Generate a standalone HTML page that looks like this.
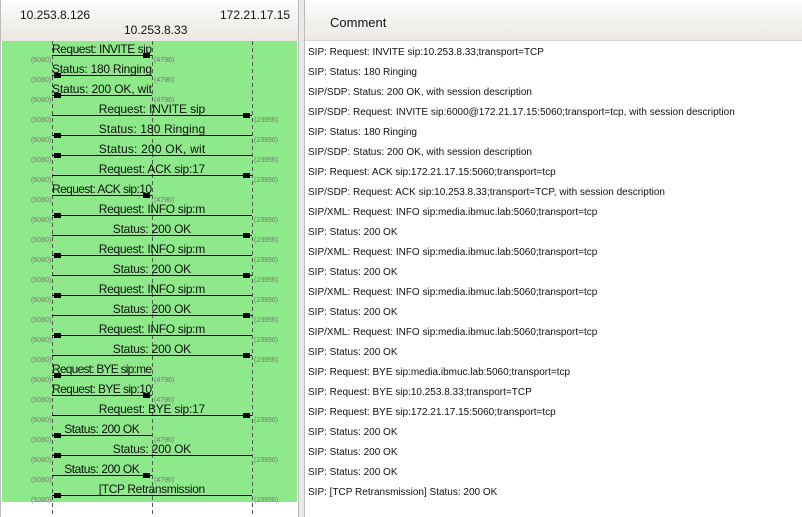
<!DOCTYPE html>
<html><head><meta charset="utf-8"><style>
body{margin:0;width:802px;height:517px;overflow:hidden;background:#fff;font-family:"Liberation Sans",sans-serif;position:relative}
.sep{position:absolute;left:298px;top:0;width:7px;height:517px;background:#e9e9e9;border-left:1px solid #bbb;border-right:1px solid #bbb;box-sizing:border-box}
.rh{position:absolute;left:305px;top:0;width:497px;height:41px;background:linear-gradient(#fdfdfd,#ece9e5);border-bottom:1px solid #d8d4ce;box-sizing:border-box}
.rh span{position:absolute;left:25px;top:15px;font-size:13px;color:#111}
.c{position:absolute;left:308px;font-size:10px;color:#111;white-space:nowrap}
</style></head><body>
<svg width="298" height="517" style="position:absolute;left:0;top:0" font-family="Liberation Sans, sans-serif">
<defs><linearGradient id="g" x1="0" y1="0" x2="0" y2="1"><stop offset="0" stop-color="#fdfdfd"/><stop offset="1" stop-color="#ebe7e2"/></linearGradient></defs>
<rect x="0" y="0" width="298" height="517" fill="#fff"/>
<rect x="0" y="0" width="298" height="41" fill="url(#g)"/>
<rect x="0" y="0" width="1" height="517" fill="#bbb"/>
<rect x="2" y="41" width="295" height="461" fill="#8ee98b"/>
<text x="20" y="19" font-size="12" fill="#111">10.253.8.126</text>
<text x="220" y="19" font-size="12" fill="#111">172.21.17.15</text>
<text x="124" y="34" font-size="12" fill="#111">10.253.8.33</text>
<g stroke="#555" stroke-dasharray="4,3" stroke-width="1"><line x1="52.5" y1="41" x2="52.5" y2="517"/><line x1="152.5" y1="41" x2="152.5" y2="517"/><line x1="252.5" y1="41" x2="252.5" y2="517"/></g>
<g id="rows" font-size="12" fill="#111"></g>
</svg>
<div class="sep"></div>
<div class="rh"><span>Comment</span></div>
<div id="cm"></div>
<script>
var R=[[52,152,"Request: INVITE sip","SIP: Request: INVITE sip:10.253.8.33;transport=TCP"],
[152,52,"Status: 180 Ringing","SIP: Status: 180 Ringing"],
[152,52,"Status: 200 OK, wit","SIP/SDP: Status: 200 OK, with session description"],
[52,252,"Request: INVITE sip","SIP/SDP: Request: INVITE sip:6000@172.21.17.15:5060;transport=tcp, with session description"],
[252,52,"Status: 180 Ringing","SIP: Status: 180 Ringing"],
[252,52,"Status: 200 OK, wit","SIP/SDP: Status: 200 OK, with session description"],
[52,252,"Request: ACK sip:17","SIP: Request: ACK sip:172.21.17.15:5060;transport=tcp"],
[52,152,"Request: ACK sip:10","SIP/SDP: Request: ACK sip:10.253.8.33;transport=TCP, with session description"],
[252,52,"Request: INFO sip:m","SIP/XML: Request: INFO sip:media.ibmuc.lab:5060;transport=tcp"],
[52,252,"Status: 200 OK","SIP: Status: 200 OK"],
[252,52,"Request: INFO sip:m","SIP/XML: Request: INFO sip:media.ibmuc.lab:5060;transport=tcp"],
[52,252,"Status: 200 OK","SIP: Status: 200 OK"],
[252,52,"Request: INFO sip:m","SIP/XML: Request: INFO sip:media.ibmuc.lab:5060;transport=tcp"],
[52,252,"Status: 200 OK","SIP: Status: 200 OK"],
[252,52,"Request: INFO sip:m","SIP/XML: Request: INFO sip:media.ibmuc.lab:5060;transport=tcp"],
[52,252,"Status: 200 OK","SIP: Status: 200 OK"],
[152,52,"Request: BYE sip:me","SIP: Request: BYE sip:media.ibmuc.lab:5060;transport=tcp"],
[52,152,"Request: BYE sip:10","SIP: Request: BYE sip:10.253.8.33;transport=TCP"],
[52,252,"Request: BYE sip:17","SIP: Request: BYE sip:172.21.17.15:5060;transport=tcp"],
[152,52,"Status: 200 OK","SIP: Status: 200 OK"],
[252,52,"Status: 200 OK","SIP: Status: 200 OK"],
[52,152,"Status: 200 OK","SIP: Status: 200 OK"],
[252,52,"[TCP Retransmission","SIP: [TCP Retransmission] Status: 200 OK"]];
var s="",c="";
R.forEach(function(r,i){var y=55+20*i,a=r[0],b=r[1],lo=Math.min(a,b),hi=Math.max(a,b),far=Math.max(a,b);
s+='<line x1="'+lo+'" y1="'+(y+.5)+'" x2="'+hi+'" y2="'+(y+.5)+'" stroke="#000"/>';
var hx=b>a?b-9:b+2;s+='<rect x="'+hx+'" y="'+(y-2)+'" width="7" height="5" fill="#000"/>';
s+='<text x="'+((lo+hi)/2)+'" y="'+(y-2)+'" text-anchor="middle" textLength="'+(hi-lo<110?Math.min(100,r[2].length*5.4):r[2].length*5.6)+'">'+r[2]+'</text>';
s+='<text x="31" y="'+(y+7)+'" font-size="7" fill="#777">(5080)</text>';
s+='<text x="'+(far+2)+'" y="'+(y+7)+'" font-size="7" fill="#777">('+(far==152?'4796':'23956')+')</text>';
c+='<div class="c" style="top:'+(47+20*i)+'px">'+r[3]+'</div>';});
document.getElementById('rows').innerHTML=s;document.getElementById('cm').innerHTML=c;
</script>
</body></html>
